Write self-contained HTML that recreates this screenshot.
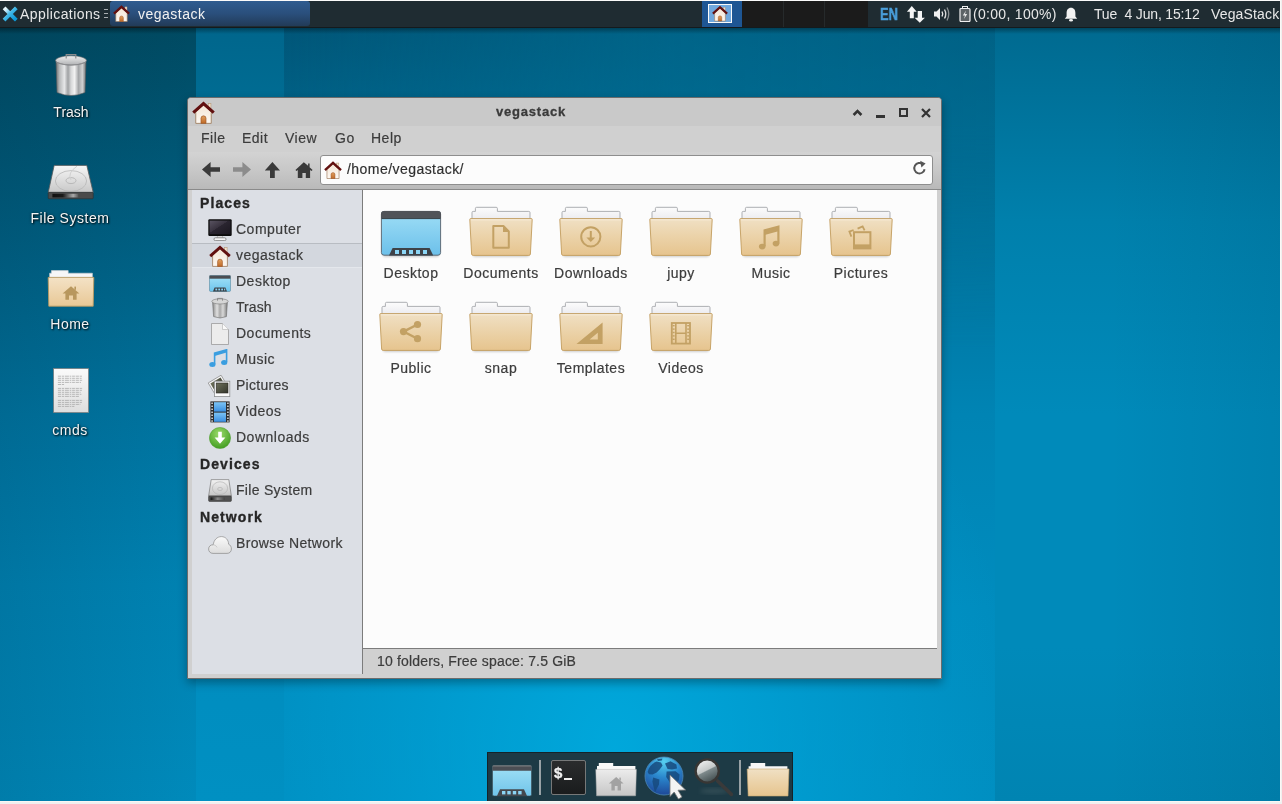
<!DOCTYPE html>
<html><head><meta charset="utf-8">
<style>
*{margin:0;padding:0;box-sizing:border-box}
html,body{width:1282px;height:804px;overflow:hidden;background:#f0f0f0;font-family:"Liberation Sans",sans-serif}
.a{position:absolute}
.t{position:absolute;white-space:nowrap;font-size:14px;line-height:14px;letter-spacing:0.5px;will-change:transform}
#wall{left:0;top:28px;width:1280px;height:773px;overflow:hidden;background:linear-gradient(180deg,#004f68 0%,#006688 30%,#0084b0 70%,#0098c8 100%)}
#panel{left:0;top:1px;width:1280px;height:27px;background:#1f2c32;border-bottom:1px solid #141a1d}
.ptxt{color:#e8e8e8}
.mt{color:#3c3c3c;margin-top:-1px;-webkit-text-stroke:0.2px #3c3c3c}
.sh{font-weight:bold;color:#262626;letter-spacing:1.1px;margin-top:-1px;-webkit-text-stroke:0.35px #262626}
.ct{width:90px;text-align:center}
.dl{color:#f4f4f4;text-align:center;text-shadow:1px 1px 2px rgba(0,0,0,0.9),0 0 3px rgba(0,0,0,0.5)}
</style></head><body>
<div class="a" style="left:0;top:0;width:1282px;height:1px;background:#fbfbfb"></div>
<div class="a" id="wall">
  <div class="a" style="left:0;top:0;width:196px;height:773px;background:linear-gradient(180deg,#004a62 0%,#005e80 25%,#0074a0 50%,#0082b2 72%,#008abb 100%)"></div>
  <div class="a" style="left:196px;top:0;width:88px;height:773px;background:linear-gradient(180deg,#00668c 0%,#00769e 25%,#0084b2 50%,#008cbe 75%,#0090c2 100%)"></div>
  <div class="a" style="left:284px;top:0;width:711px;height:773px;background:linear-gradient(180deg,#005678 0%,#00729c 25%,#0084b4 50%,#008cbe 75%,#008ec0 100%)"></div>
  <div class="a" style="left:284px;top:0;width:711px;height:320px;background:linear-gradient(90deg,rgba(0,112,150,0) 0%,rgba(0,112,150,0.55) 55%,rgba(0,112,150,0.45) 100%);-webkit-mask-image:linear-gradient(180deg,#000 0%,#000 30%,transparent 100%)"></div>
  <div class="a" style="left:284px;top:0;width:711px;height:773px;background:radial-gradient(ellipse 400px 540px at 330px 720px,rgba(0,172,224,0.85) 0%,rgba(0,168,222,0.45) 50%,rgba(0,160,216,0) 100%)"></div>
  <div class="a" style="left:995px;top:0;width:285px;height:773px;background:linear-gradient(180deg,#006a90 0%,#0080ac 25%,#008aba 50%,#008aba 80%,#0084b2 100%)"></div>
  <div class="a" style="left:995px;top:0;width:285px;height:773px;background:linear-gradient(90deg,rgba(0,30,50,0) 40%,rgba(0,30,50,0.08) 100%)"></div>
  <div class="a" style="left:0;top:0;width:196px;height:773px;background:linear-gradient(90deg,rgba(0,30,50,0.12) 0%,rgba(0,30,50,0) 100%)"></div>
  <div class="a" style="left:0;top:0;width:1280px;height:6px;background:linear-gradient(180deg,rgba(0,0,0,0.35),rgba(0,0,0,0))"></div>
</div>
<div class="a" id="panel"></div>
<svg width="0" height="0" style="position:absolute">
 <defs>
  <linearGradient id="hbody" x1="0" y1="0" x2="0" y2="1"><stop offset="0" stop-color="#f4e6d6"/><stop offset="1" stop-color="#fdf8f2"/></linearGradient>
  <linearGradient id="hdoor" x1="0" y1="0" x2="0" y2="1"><stop offset="0" stop-color="#e0a060"/><stop offset="1" stop-color="#c06a28"/></linearGradient>
  <linearGradient id="fback" x1="0" y1="0" x2="0" y2="1"><stop offset="0" stop-color="#fcfcfc"/><stop offset="1" stop-color="#ececf0"/></linearGradient>
  <linearGradient id="ffront" x1="0" y1="0" x2="0" y2="1"><stop offset="0" stop-color="#f0e0c4"/><stop offset="0.5" stop-color="#ebd2a8"/><stop offset="1" stop-color="#e6c48e"/></linearGradient>
  <filter id="fsh" x="-20%" y="-20%" width="140%" height="160%"><feGaussianBlur stdDeviation="1.2"/></filter>
  <linearGradient id="xg" x1="0" y1="0" x2="1" y2="1"><stop offset="0" stop-color="#e8f6fc"/><stop offset="0.45" stop-color="#40b8e8"/><stop offset="1" stop-color="#0c98d8"/></linearGradient>
 </defs>
</svg>
<svg class="a" style="left:2px;top:6px" width="16" height="16" viewBox="0 0 16 16"><path d="M3.4 3.2 L13 12.8 M13 3.2 L3.4 12.8" stroke="url(#xg)" stroke-width="3.8" stroke-linecap="square"/></svg>
<div class="t ptxt" style="left:20px;top:7px;letter-spacing:0.42px">Applications</div>
<div class="a" style="left:104px;top:9px;width:4px;height:1px;background:#a8adb0"></div>
<div class="a" style="left:104px;top:13px;width:4px;height:1px;background:#a8adb0"></div>
<div class="a" style="left:104px;top:17px;width:4px;height:1px;background:#a8adb0"></div>
<div class="a" style="left:110px;top:1px;width:200px;height:25px;border-radius:3px;background:linear-gradient(180deg,#2f5c90 0%,#2a4f7c 50%,#223b58 100%)"></div>
<svg class="a" style="left:113px;top:5px" width="17" height="17" viewBox="0 0 22 22"><rect x="15.5" y="2.5" width="2.6" height="6" fill="#f3e3cf" stroke="#b89a7a" stroke-width="0.6"/>
   <path d="M3.6 10.2 L11 3.6 L18.4 10.2 V21.4 H3.6 Z" fill="url(#hbody)" stroke="#9c7a5a" stroke-width="0.8"/>
   <path d="M1.2 11.2 L11 2.4 L20.8 11.2" fill="none" stroke="#621010" stroke-width="2.9" stroke-linejoin="miter"/>
   <path d="M8.6 21.4 V16.6 A2.4 2.4 0 0 1 13.4 16.6 V21.4 Z" fill="url(#hdoor)" stroke="#9a5020" stroke-width="0.6"/></svg>
<div class="t ptxt" style="left:138px;top:7px;color:#f2f2f2">vegastack</div>
<div class="a" style="left:702px;top:1px;width:40px;height:26px;background:#1e5694"></div>
<div class="a" style="left:708px;top:4px;width:24px;height:19px;border:1.5px solid #fafafa;background:#70a8de"></div>
<svg class="a" style="left:712px;top:5px" width="16" height="17" viewBox="0 0 22 22"><rect x="15.5" y="2.5" width="2.6" height="6" fill="#f3e3cf" stroke="#b89a7a" stroke-width="0.6"/>
   <path d="M3.6 10.2 L11 3.6 L18.4 10.2 V21.4 H3.6 Z" fill="url(#hbody)" stroke="#9c7a5a" stroke-width="0.8"/>
   <path d="M1.2 11.2 L11 2.4 L20.8 11.2" fill="none" stroke="#621010" stroke-width="2.9" stroke-linejoin="miter"/>
   <path d="M8.6 21.4 V16.6 A2.4 2.4 0 0 1 13.4 16.6 V21.4 Z" fill="url(#hdoor)" stroke="#9a5020" stroke-width="0.6"/></svg>
<div class="a" style="left:742px;top:1px;width:126px;height:26px;background:#1b1b1b"></div>
<div class="a" style="left:783px;top:1px;width:1px;height:26px;background:#262a2b"></div>
<div class="a" style="left:824px;top:1px;width:1px;height:26px;background:#262a2b"></div>
<div class="t" style="left:880px;top:7px;font-size:16px;line-height:16px;font-weight:bold;color:#4a9fdc;letter-spacing:0;transform:scaleX(0.8);transform-origin:0 0;-webkit-text-stroke:0.5px #4a9fdc">EN</div>
<svg class="a" style="left:906px;top:5px" width="20" height="19" viewBox="0 0 20 19"><path d="M5.8 0.9 L0.9 6.7 H3.8 V13.3 H7.8 V6.7 H10.7 Z" fill="#f4f4f4"/><path d="M13.8 17.8 L8.6 12.8 H11.7 V6 H16 V12.8 H18.9 Z" fill="#f4f4f4"/></svg>
<svg class="a" style="left:933px;top:6px" width="17" height="16" viewBox="0 0 17 16"><path d="M1 5.5 H3.5 L7 2 V14 L3.5 10.5 H1 Z" fill="#f0f0f0"/><path d="M9 5.5 Q10.5 8 9 10.5" stroke="#e8e8e8" stroke-width="1.4" fill="none"/><path d="M11.5 3.5 Q14 8 11.5 12.5" stroke="#d8d8d8" stroke-width="1.4" fill="none"/><path d="M14 1.5 Q17.5 8 14 14.5" stroke="#8a8f92" stroke-width="1.3" fill="none"/></svg>
<svg class="a" style="left:959px;top:6px" width="12" height="16" viewBox="0 0 12 16"><rect x="3.5" y="0.5" width="5" height="2" fill="none" stroke="#eee" stroke-width="1"/><rect x="1" y="2.5" width="10" height="13" rx="1" fill="#5d6366" stroke="#f0f0f0" stroke-width="1.2"/><path d="M7 4.5 L3.8 9.5 H6 L5 13 L8.2 8 H6 Z" fill="#e8e8e8"/></svg>
<div class="t ptxt" style="left:973px;top:7px;letter-spacing:0.3px">(0:00, 100%)</div>
<svg class="a" style="left:1064px;top:7px" width="14" height="15" viewBox="0 0 14 15"><path d="M7 0.8 C4 0.8 2.6 3.2 2.6 6 V9.5 L0.8 11.8 H13.2 L11.4 9.5 V6 C11.4 3.2 10 0.8 7 0.8 Z" fill="#f2f2f2"/><ellipse cx="7" cy="13.2" rx="2" ry="1.3" fill="#f2f2f2"/></svg>
<div class="t ptxt" style="left:1094px;top:7px;letter-spacing:-0.17px">Tue&nbsp; 4 Jun, 15:12</div>
<div class="t ptxt" style="left:1211px;top:7px;letter-spacing:0.15px">VegaStack</div>
<!-- DESKTOP ICONS -->
<svg class="a" style="left:52px;top:52px" width="38" height="46" viewBox="0 0 38 46">
 <defs><linearGradient id="tcan" x1="0" y1="0" x2="1" y2="0"><stop offset="0" stop-color="#6e7072"/><stop offset="0.12" stop-color="#b8babb"/><stop offset="0.28" stop-color="#e6e7e8"/><stop offset="0.4" stop-color="#9fa1a3"/><stop offset="0.5" stop-color="#d6d7d8"/><stop offset="0.62" stop-color="#f2f2f2"/><stop offset="0.75" stop-color="#a4a6a8"/><stop offset="0.88" stop-color="#cfd0d1"/><stop offset="1" stop-color="#707274"/></linearGradient>
 <linearGradient id="tlid" x1="0" y1="0" x2="0" y2="1"><stop offset="0" stop-color="#f0f0f0"/><stop offset="1" stop-color="#b0b2b4"/></linearGradient></defs>
 <path d="M4 8.5 L5 40.5 Q19 46.5 33 40.5 L34 8.5 Z" fill="url(#tcan)" stroke="#5a5c5e" stroke-width="0.6"/>
 <ellipse cx="19" cy="8.4" rx="15.4" ry="4.6" fill="url(#tlid)" stroke="#6a6c6e" stroke-width="0.6"/>
 <path d="M4.4 10.4 Q19 16 33.6 10.4" fill="none" stroke="#8a8c8e" stroke-width="0.8"/>
 <path d="M14.2 6.6 V2.6 H23.8 V6.6" fill="none" stroke="#8a8c8e" stroke-width="1.2"/>
</svg>
<div class="t dl" style="left:0;top:105px;width:142px;letter-spacing:0">Trash</div>
<svg class="a" style="left:47px;top:163px" width="48" height="38" viewBox="0 0 48 38">
 <defs><linearGradient id="dtop" x1="0" y1="0" x2="0" y2="1"><stop offset="0" stop-color="#f6f6f6"/><stop offset="1" stop-color="#c8c8c8"/></linearGradient>
 <linearGradient id="dslot" x1="0" y1="0" x2="1" y2="0"><stop offset="0" stop-color="#111"/><stop offset="0.4" stop-color="#1a1a1a"/><stop offset="0.8" stop-color="#aaa"/><stop offset="1" stop-color="#555"/></linearGradient></defs>
 <path d="M7.2 2.4 H39.8 L46.2 29.4 H1.2 Z" fill="url(#dtop)" stroke="#5c5c5c" stroke-width="0.8"/>
 <ellipse cx="24" cy="18" rx="15.6" ry="10.4" fill="none" stroke="#b8b8b8" stroke-width="0.8"/>
 <ellipse cx="24" cy="17.6" rx="5" ry="3" fill="none" stroke="#b0b0b0" stroke-width="0.8"/>
 <path d="M30 3.2 Q20 10 24 17" fill="none" stroke="#d0d0d0" stroke-width="1"/>
 <rect x="1.2" y="29.4" width="45" height="6.4" rx="0.8" fill="#4a4a4a" stroke="#2e2e2e" stroke-width="0.6"/>
 <rect x="5.4" y="30.8" width="26" height="3.6" fill="url(#dslot)"/>
</svg>
<div class="t dl" style="left:0;top:211px;width:140px;letter-spacing:0.55px">File System</div>
<svg class="a" style="left:46px;top:268px" width="50" height="42" viewBox="0 0 50 42">
 <defs><linearGradient id="hf" x1="0" y1="0" x2="0" y2="1"><stop offset="0" stop-color="#f4e2c6"/><stop offset="1" stop-color="#e8c896"/></linearGradient></defs>
 <path d="M3.6 10 V5.2 H5.4 V2.6 H22.2 V5.2 H46.4 V10 Z" fill="#f6f6f8" stroke="#d0d0d4" stroke-width="0.6"/>
 <path d="M2.2 9.4 H47.8 L47.2 38.2 H2.8 Z" fill="url(#hf)" stroke="#b89a62" stroke-width="0.9"/>
 <path d="M25 18.2 L16.6 25.6 H19.4 V31.8 H23 V27.6 H27 V31.8 H30.6 V25.6 H33.4 Z" fill="#b8975e"/>
 <rect x="28.4" y="18.6" width="1.6" height="3.2" fill="#b8975e"/>
</svg>
<div class="t dl" style="left:0;top:317px;width:140px">Home</div>
<svg class="a" style="left:52px;top:367px" width="38" height="47" viewBox="0 0 38 47">
 <defs><linearGradient id="pap" x1="0" y1="0" x2="0" y2="1"><stop offset="0" stop-color="#fafafa"/><stop offset="1" stop-color="#dedede"/></linearGradient></defs>
 <rect x="1.6" y="1.6" width="35" height="44" fill="url(#pap)" stroke="#7a7a7a" stroke-width="0.7"/>
 <g stroke="#a0a0a0" stroke-width="0.7" stroke-dasharray="3.2 0.8 2.2 0.8 4 0.8 1.6 0.8 2.8 0.8"><path d="M5.9 9.2 H30.0"/><path d="M5.9 11.3 H29.6"/><path d="M5.9 13.3 H30.8"/><path d="M5.9 15.4 H29.0"/><path d="M5.9 17.5 H12.4"/><path d="M5.9 21.4 H30.8"/><path d="M5.9 23.3 H30.4"/><path d="M5.9 25.3 H28.6"/><path d="M5.9 27.3 H29.4"/><path d="M5.9 29.4 H27.0"/><path d="M5.9 33.4 H30.8"/><path d="M5.9 35.4 H30.0"/><path d="M5.9 37.4 H28.4"/><path d="M5.9 39.4 H22.4"/></g>
</svg>
<div class="t dl" style="left:0;top:423px;width:140px">cmds</div>
<!-- WINDOW -->
<div class="a" style="left:187px;top:97px;width:755px;height:582px;border-radius:4px 4px 1px 1px;box-shadow:0 4px 10px rgba(0,0,0,0.32)"></div>
<div class="a" id="win" style="left:187px;top:97px;width:755px;height:582px;border:1px solid #6c6c6c;border-radius:4px 4px 1px 1px;background:#d0d0d0;overflow:hidden">
 <div class="a" style="left:0;top:0;width:753px;height:28px;background:#c9c9c9"></div>
 <svg class="a" style="left:4px;top:3px" width="23" height="23" viewBox="0 0 22 22"><rect x="15.5" y="2.5" width="2.6" height="6" fill="#f3e3cf" stroke="#b89a7a" stroke-width="0.6"/>
   <path d="M3.6 10.2 L11 3.6 L18.4 10.2 V21.4 H3.6 Z" fill="url(#hbody)" stroke="#9c7a5a" stroke-width="0.8"/>
   <path d="M1.2 11.2 L11 2.4 L20.8 11.2" fill="none" stroke="#621010" stroke-width="2.9" stroke-linejoin="miter"/>
   <path d="M8.6 21.4 V16.6 A2.4 2.4 0 0 1 13.4 16.6 V21.4 Z" fill="url(#hdoor)" stroke="#9a5020" stroke-width="0.6"/></svg>
 <div class="t" style="left:308px;top:7px;font-weight:bold;font-size:13px;line-height:13px;letter-spacing:0.8px;color:#3a3a3a;-webkit-text-stroke:0.3px #3a3a3a">vegastack</div>
 <div class="a" style="left:0;top:28px;width:753px;height:26px;background:#d0d0d0"></div>
 <div class="t mt" style="left:13px;top:34px">File</div>
 <div class="t mt" style="left:54px;top:34px">Edit</div>
 <div class="t mt" style="left:97px;top:34px">View</div>
 <div class="t mt" style="left:147px;top:34px">Go</div>
 <div class="t mt" style="left:183px;top:34px">Help</div>
 <div class="a" style="left:0;top:54px;width:753px;height:37px;background:linear-gradient(180deg,#d3d3d3 0%,#c6c6c6 55%,#b9b9b9 100%)"></div>
 <div class="a" style="left:0;top:91px;width:753px;height:1px;background:#8a8a8a"></div>
 <svg class="a" style="left:12px;top:62px" width="22" height="18" viewBox="0 0 22 18"><path d="M2 9.4 L10.6 2 V7.2 H20 V11.8 H10.6 V17 Z" fill="#3a3a3a"/></svg>
 <svg class="a" style="left:44px;top:62px" width="22" height="18" viewBox="0 0 22 18"><path d="M19 9.4 L10.4 2 V7.2 H1 V11.8 H10.4 V17 Z" fill="#8c8c8c"/></svg>
 <svg class="a" style="left:75px;top:62px" width="18" height="18" viewBox="0 0 18 18"><path d="M9.4 2 L17 10.4 H11.8 V18 H7 V10.4 H1.8 Z" fill="#3a3a3a"/></svg>
 <svg class="a" style="left:106px;top:62px" width="20" height="18" viewBox="0 0 20 18"><path d="M9.8 2.2 L1.4 10 L2.6 11 L3.8 9.9 V18 H8.4 V13 H11.8 V18 H16.1 V9.9 L17.4 11 L18.6 10 L15.6 7.2 V3.4 H14.1 V5.8 Z" fill="#3a3a3a"/></svg>
 <div class="a" style="left:132px;top:57px;width:613px;height:30px;background:#fcfcfc;border:1px solid #8e8e8e;border-radius:3px"></div>
 <svg class="a" style="left:136px;top:63px" width="18" height="18" viewBox="0 0 22 22"><rect x="15.5" y="2.5" width="2.6" height="6" fill="#f3e3cf" stroke="#b89a7a" stroke-width="0.6"/>
   <path d="M3.6 10.2 L11 3.6 L18.4 10.2 V21.4 H3.6 Z" fill="url(#hbody)" stroke="#9c7a5a" stroke-width="0.8"/>
   <path d="M1.2 11.2 L11 2.4 L20.8 11.2" fill="none" stroke="#621010" stroke-width="2.9" stroke-linejoin="miter"/>
   <path d="M8.6 21.4 V16.6 A2.4 2.4 0 0 1 13.4 16.6 V21.4 Z" fill="url(#hdoor)" stroke="#9a5020" stroke-width="0.6"/></svg>
 <div class="t mt" style="left:159px;top:65px;color:#2e2e2e;letter-spacing:0.45px">/home/vegastack/</div>
 <svg class="a" style="left:724px;top:62px" width="16" height="16" viewBox="0 0 16 16"><path d="M12.6 9.2 A5.2 5.2 0 1 1 10.8 4.2" fill="none" stroke="#555" stroke-width="2"/><path d="M8.2 0.8 L13.6 3.6 L9.4 7.6 Z" fill="#555"/></svg>
 <!-- body -->
 <div class="a" style="left:4px;top:92px;width:170px;height:484px;background:#dcdfe5"></div>
 <div class="a" style="left:174px;top:92px;width:1px;height:484px;background:#7c7c7c"></div>
 <div class="a" style="left:175px;top:92px;width:574px;height:458px;background:#fcfcfc"></div>
 <div class="a" style="left:175px;top:550px;width:574px;height:1px;background:#7c7c7c"></div>
 <div class="t mt" style="left:189px;top:557px;letter-spacing:0.17px">10 folders, Free space: 7.5 GiB</div>
 <!-- content -->
 <div class="t mt ct" style="left:178px;top:169px">Desktop</div>
 <svg class="a" style="left:281px;top:102px" width="64" height="64" viewBox="0 0 64 64"><rect x="4" y="52" width="56" height="5" rx="2" fill="#000" opacity="0.18" filter="url(#fsh)"/>
   <path d="M3 19 V12.6 Q3 11.4 4.2 11.4 H6.4 V8.5 Q6.4 7.3 7.6 7.3 H27.2 Q28.4 7.3 28.4 8.5 V11.4 H59.8 Q61 11.4 61 12.6 V19 Z" fill="url(#fback)" stroke="#a4a6aa" stroke-width="0.9"/>
   <path d="M1.4 18.6 H62.6 Q63.2 18.6 63.2 19.6 L61.4 54 Q61.3 55.4 59.8 55.4 H4.2 Q2.7 55.4 2.6 54 L0.8 19.6 Q0.8 18.6 1.4 18.6 Z" fill="url(#ffront)" stroke="#c29c5c" stroke-width="0.9"/>
   <path d="M2 19.8 H62" stroke="#f8eedc" stroke-width="0.9"/></svg>
 <div class="t mt ct" style="left:268px;top:169px">Documents</div>
 <svg class="a" style="left:371px;top:102px" width="64" height="64" viewBox="0 0 64 64"><rect x="4" y="52" width="56" height="5" rx="2" fill="#000" opacity="0.18" filter="url(#fsh)"/>
   <path d="M3 19 V12.6 Q3 11.4 4.2 11.4 H6.4 V8.5 Q6.4 7.3 7.6 7.3 H27.2 Q28.4 7.3 28.4 8.5 V11.4 H59.8 Q61 11.4 61 12.6 V19 Z" fill="url(#fback)" stroke="#a4a6aa" stroke-width="0.9"/>
   <path d="M1.4 18.6 H62.6 Q63.2 18.6 63.2 19.6 L61.4 54 Q61.3 55.4 59.8 55.4 H4.2 Q2.7 55.4 2.6 54 L0.8 19.6 Q0.8 18.6 1.4 18.6 Z" fill="url(#ffront)" stroke="#c29c5c" stroke-width="0.9"/>
   <path d="M2 19.8 H62" stroke="#f8eedc" stroke-width="0.9"/></svg>
 <div class="t mt ct" style="left:358px;top:169px">Downloads</div>
 <svg class="a" style="left:461px;top:102px" width="64" height="64" viewBox="0 0 64 64"><rect x="4" y="52" width="56" height="5" rx="2" fill="#000" opacity="0.18" filter="url(#fsh)"/>
   <path d="M3 19 V12.6 Q3 11.4 4.2 11.4 H6.4 V8.5 Q6.4 7.3 7.6 7.3 H27.2 Q28.4 7.3 28.4 8.5 V11.4 H59.8 Q61 11.4 61 12.6 V19 Z" fill="url(#fback)" stroke="#a4a6aa" stroke-width="0.9"/>
   <path d="M1.4 18.6 H62.6 Q63.2 18.6 63.2 19.6 L61.4 54 Q61.3 55.4 59.8 55.4 H4.2 Q2.7 55.4 2.6 54 L0.8 19.6 Q0.8 18.6 1.4 18.6 Z" fill="url(#ffront)" stroke="#c29c5c" stroke-width="0.9"/>
   <path d="M2 19.8 H62" stroke="#f8eedc" stroke-width="0.9"/></svg>
 <div class="t mt ct" style="left:448px;top:169px">jupy</div>
 <svg class="a" style="left:551px;top:102px" width="64" height="64" viewBox="0 0 64 64"><rect x="4" y="52" width="56" height="5" rx="2" fill="#000" opacity="0.18" filter="url(#fsh)"/>
   <path d="M3 19 V12.6 Q3 11.4 4.2 11.4 H6.4 V8.5 Q6.4 7.3 7.6 7.3 H27.2 Q28.4 7.3 28.4 8.5 V11.4 H59.8 Q61 11.4 61 12.6 V19 Z" fill="url(#fback)" stroke="#a4a6aa" stroke-width="0.9"/>
   <path d="M1.4 18.6 H62.6 Q63.2 18.6 63.2 19.6 L61.4 54 Q61.3 55.4 59.8 55.4 H4.2 Q2.7 55.4 2.6 54 L0.8 19.6 Q0.8 18.6 1.4 18.6 Z" fill="url(#ffront)" stroke="#c29c5c" stroke-width="0.9"/>
   <path d="M2 19.8 H62" stroke="#f8eedc" stroke-width="0.9"/></svg>
 <div class="t mt ct" style="left:538px;top:169px">Music</div>
 <svg class="a" style="left:641px;top:102px" width="64" height="64" viewBox="0 0 64 64"><rect x="4" y="52" width="56" height="5" rx="2" fill="#000" opacity="0.18" filter="url(#fsh)"/>
   <path d="M3 19 V12.6 Q3 11.4 4.2 11.4 H6.4 V8.5 Q6.4 7.3 7.6 7.3 H27.2 Q28.4 7.3 28.4 8.5 V11.4 H59.8 Q61 11.4 61 12.6 V19 Z" fill="url(#fback)" stroke="#a4a6aa" stroke-width="0.9"/>
   <path d="M1.4 18.6 H62.6 Q63.2 18.6 63.2 19.6 L61.4 54 Q61.3 55.4 59.8 55.4 H4.2 Q2.7 55.4 2.6 54 L0.8 19.6 Q0.8 18.6 1.4 18.6 Z" fill="url(#ffront)" stroke="#c29c5c" stroke-width="0.9"/>
   <path d="M2 19.8 H62" stroke="#f8eedc" stroke-width="0.9"/></svg>
 <div class="t mt ct" style="left:628px;top:169px">Pictures</div>
 <svg class="a" style="left:191px;top:197px" width="64" height="64" viewBox="0 0 64 64"><rect x="4" y="52" width="56" height="5" rx="2" fill="#000" opacity="0.18" filter="url(#fsh)"/>
   <path d="M3 19 V12.6 Q3 11.4 4.2 11.4 H6.4 V8.5 Q6.4 7.3 7.6 7.3 H27.2 Q28.4 7.3 28.4 8.5 V11.4 H59.8 Q61 11.4 61 12.6 V19 Z" fill="url(#fback)" stroke="#a4a6aa" stroke-width="0.9"/>
   <path d="M1.4 18.6 H62.6 Q63.2 18.6 63.2 19.6 L61.4 54 Q61.3 55.4 59.8 55.4 H4.2 Q2.7 55.4 2.6 54 L0.8 19.6 Q0.8 18.6 1.4 18.6 Z" fill="url(#ffront)" stroke="#c29c5c" stroke-width="0.9"/>
   <path d="M2 19.8 H62" stroke="#f8eedc" stroke-width="0.9"/></svg>
 <div class="t mt ct" style="left:178px;top:264px">Public</div>
 <svg class="a" style="left:281px;top:197px" width="64" height="64" viewBox="0 0 64 64"><rect x="4" y="52" width="56" height="5" rx="2" fill="#000" opacity="0.18" filter="url(#fsh)"/>
   <path d="M3 19 V12.6 Q3 11.4 4.2 11.4 H6.4 V8.5 Q6.4 7.3 7.6 7.3 H27.2 Q28.4 7.3 28.4 8.5 V11.4 H59.8 Q61 11.4 61 12.6 V19 Z" fill="url(#fback)" stroke="#a4a6aa" stroke-width="0.9"/>
   <path d="M1.4 18.6 H62.6 Q63.2 18.6 63.2 19.6 L61.4 54 Q61.3 55.4 59.8 55.4 H4.2 Q2.7 55.4 2.6 54 L0.8 19.6 Q0.8 18.6 1.4 18.6 Z" fill="url(#ffront)" stroke="#c29c5c" stroke-width="0.9"/>
   <path d="M2 19.8 H62" stroke="#f8eedc" stroke-width="0.9"/></svg>
 <div class="t mt ct" style="left:268px;top:264px">snap</div>
 <svg class="a" style="left:371px;top:197px" width="64" height="64" viewBox="0 0 64 64"><rect x="4" y="52" width="56" height="5" rx="2" fill="#000" opacity="0.18" filter="url(#fsh)"/>
   <path d="M3 19 V12.6 Q3 11.4 4.2 11.4 H6.4 V8.5 Q6.4 7.3 7.6 7.3 H27.2 Q28.4 7.3 28.4 8.5 V11.4 H59.8 Q61 11.4 61 12.6 V19 Z" fill="url(#fback)" stroke="#a4a6aa" stroke-width="0.9"/>
   <path d="M1.4 18.6 H62.6 Q63.2 18.6 63.2 19.6 L61.4 54 Q61.3 55.4 59.8 55.4 H4.2 Q2.7 55.4 2.6 54 L0.8 19.6 Q0.8 18.6 1.4 18.6 Z" fill="url(#ffront)" stroke="#c29c5c" stroke-width="0.9"/>
   <path d="M2 19.8 H62" stroke="#f8eedc" stroke-width="0.9"/></svg>
 <div class="t mt ct" style="left:358px;top:264px">Templates</div>
 <svg class="a" style="left:461px;top:197px" width="64" height="64" viewBox="0 0 64 64"><rect x="4" y="52" width="56" height="5" rx="2" fill="#000" opacity="0.18" filter="url(#fsh)"/>
   <path d="M3 19 V12.6 Q3 11.4 4.2 11.4 H6.4 V8.5 Q6.4 7.3 7.6 7.3 H27.2 Q28.4 7.3 28.4 8.5 V11.4 H59.8 Q61 11.4 61 12.6 V19 Z" fill="url(#fback)" stroke="#a4a6aa" stroke-width="0.9"/>
   <path d="M1.4 18.6 H62.6 Q63.2 18.6 63.2 19.6 L61.4 54 Q61.3 55.4 59.8 55.4 H4.2 Q2.7 55.4 2.6 54 L0.8 19.6 Q0.8 18.6 1.4 18.6 Z" fill="url(#ffront)" stroke="#c29c5c" stroke-width="0.9"/>
   <path d="M2 19.8 H62" stroke="#f8eedc" stroke-width="0.9"/></svg>
 <div class="t mt ct" style="left:448px;top:264px">Videos</div>
 <svg class="a" style="left:191px;top:102px" width="64" height="64" viewBox="0 0 64 64">
  <defs><linearGradient id="dskb" x1="0" y1="0" x2="0" y2="1"><stop offset="0" stop-color="#9edef6"/><stop offset="1" stop-color="#6cc0ea"/></linearGradient></defs>
  <rect x="4" y="52" width="56" height="5" rx="2" fill="#000" opacity="0.18" filter="url(#fsh)"/>
  <rect x="2.4" y="11.4" width="59.2" height="43.8" rx="2.6" fill="url(#dskb)" stroke="#56606a" stroke-width="0.9"/>
  <path d="M2 14 Q2 11 5 11 H59 Q62 11 62 14 V18.2 H2 Z" fill="#505358"/>
  <path d="M2.6 18.6 H61.4" stroke="#2a2c30" stroke-width="0.9"/>
  <path d="M10 55.4 L13.6 48 H50.6 L54.2 55.4 Z" fill="#3e4248"/>
  <g fill="#8cd6f6"><rect x="16" y="50" width="4" height="4"/><rect x="23" y="50" width="4" height="4"/><rect x="30" y="50" width="4" height="4"/><rect x="37" y="50" width="4" height="4"/><rect x="44" y="50" width="4" height="4"/></g>
 </svg>
 <svg class="a" style="left:281px;top:102px" width="64" height="64" viewBox="0 0 64 64"><path d="M24.3 26 H34.4 L39.8 31.4 V47.7 H24.3 Z" fill="none" stroke="#c3a164" stroke-width="2" stroke-linejoin="round"/><path d="M34 26 V32 H40 Z" fill="#c3a164"/></svg>
 <svg class="a" style="left:371px;top:102px" width="64" height="64" viewBox="0 0 64 64"><circle cx="31.8" cy="36.8" r="9.6" fill="none" stroke="#c3a164" stroke-width="2"/><path d="M31.8 31 V40" stroke="#c3a164" stroke-width="2"/><path d="M27.4 37.6 L31.8 42 L36.2 37.6 Z" fill="#c3a164"/></svg>
 <svg class="a" style="left:551px;top:102px" width="64" height="64" viewBox="0 0 64 64"><path d="M25.6 46.2 V30.4 L39.4 26.6 V43.4" fill="none" stroke="#c3a164" stroke-width="2.2"/><path d="M25.6 30.2 L39.4 26.4 V31.2 L25.6 35 Z" fill="#c3a164"/><ellipse cx="23.2" cy="46.6" rx="3.3" ry="2.8" fill="#c3a164"/><ellipse cx="37" cy="43.6" rx="3.3" ry="2.8" fill="#c3a164"/></svg>
 <svg class="a" style="left:641px;top:102px" width="64" height="64" viewBox="0 0 64 64"><rect x="25" y="32.2" width="16.4" height="16.2" fill="none" stroke="#c3a164" stroke-width="2"/><rect x="25" y="44.4" width="16.4" height="4" fill="#c3a164"/><path d="M22.4 36.6 L20.4 31.6 L24.6 30" fill="none" stroke="#c3a164" stroke-width="1.8"/><path d="M28.6 28.6 L33.6 26.4 L35.6 30.4" fill="none" stroke="#c3a164" stroke-width="1.8"/></svg>
 <svg class="a" style="left:191px;top:197px" width="64" height="64" viewBox="0 0 64 64"><path d="M38.5 29.5 L24.5 36.6 L38.5 43.7" fill="none" stroke="#c3a164" stroke-width="2.4"/><circle cx="38.5" cy="29.5" r="3.6" fill="#c3a164"/><circle cx="24.5" cy="36.6" r="3.6" fill="#c3a164"/><circle cx="38.5" cy="43.7" r="3.6" fill="#c3a164"/></svg>
 <svg class="a" style="left:371px;top:197px" width="64" height="64" viewBox="0 0 64 64"><path d="M17.5 49 L43.6 27.6 V49 Z M30.6 44.6 H38.8 V37.8 Z" fill="#c3a164" fill-rule="evenodd"/></svg>
 <svg class="a" style="left:461px;top:197px" width="64" height="64" viewBox="0 0 64 64"><rect x="22.8" y="28" width="18.2" height="20.6" fill="none" stroke="#c3a164" stroke-width="1.8"/><path d="M26.8 28 V48.6 M37 28 V48.6 M26.8 38.3 H37" stroke="#c3a164" stroke-width="1.6"/><g fill="#c3a164"><rect x="23.6" y="30" width="2" height="1.4"/><rect x="23.6" y="33.4" width="2" height="1.4"/><rect x="23.6" y="36.8" width="2" height="1.4"/><rect x="23.6" y="40.2" width="2" height="1.4"/><rect x="23.6" y="43.6" width="2" height="1.4"/><rect x="38.2" y="30" width="2" height="1.4"/><rect x="38.2" y="33.4" width="2" height="1.4"/><rect x="38.2" y="36.8" width="2" height="1.4"/><rect x="38.2" y="40.2" width="2" height="1.4"/><rect x="38.2" y="43.6" width="2" height="1.4"/></g></svg>
 <!-- sidebar -->
 <div class="a" style="left:4px;top:145px;width:170px;height:25px;background:#d3d7de;border-top:1px solid #b8bcc2;border-bottom:1px solid #e4e7ec"></div>
 <div class="t sh" style="left:12px;top:99px">Places</div>
 <div class="t sh" style="left:12px;top:360px">Devices</div>
 <div class="t sh" style="left:12px;top:413px">Network</div>
 <div class="t mt" style="left:48px;top:125px">Computer</div>
 <div class="t mt" style="left:48px;top:151px">vegastack</div>
 <div class="t mt" style="left:48px;top:177px">Desktop</div>
 <div class="t mt" style="left:48px;top:203px;letter-spacing:0.05px">Trash</div>
 <div class="t mt" style="left:48px;top:229px">Documents</div>
 <div class="t mt" style="left:48px;top:255px">Music</div>
 <div class="t mt" style="left:48px;top:281px;letter-spacing:0.27px">Pictures</div>
 <div class="t mt" style="left:48px;top:307px">Videos</div>
 <div class="t mt" style="left:48px;top:333px">Downloads</div>
 <div class="t mt" style="left:48px;top:386px;letter-spacing:0.30px">File System</div>
 <div class="t mt" style="left:48px;top:439px;letter-spacing:0.35px">Browse Network</div>

 <svg class="a" style="left:20px;top:121px" width="24" height="22" viewBox="0 0 24 22">
  <defs><linearGradient id="scr" x1="0" y1="0" x2="1" y2="1"><stop offset="0" stop-color="#5a5462"/><stop offset="0.45" stop-color="#38323e"/><stop offset="0.46" stop-color="#2a2530"/><stop offset="1" stop-color="#1c1820"/></linearGradient></defs>
  <path d="M9.6 16.5 H14.4 L15 19.4 H9 Z" fill="#d8d8d8" stroke="#8a8a8a" stroke-width="0.5"/>
  <rect x="6" y="18.8" width="12" height="2.8" rx="1.3" fill="#f6f6f6" stroke="#6a6a6a" stroke-width="0.7"/>
  <rect x="0.3" y="0.3" width="23.4" height="16.6" rx="1.2" fill="#0c0c0c"/>
  <rect x="1.6" y="1.6" width="20.8" height="13.6" fill="url(#scr)"/>
 </svg>
 <svg class="a" style="left:21px;top:147px" width="22" height="22" viewBox="0 0 22 22"><rect x="15.5" y="2.5" width="2.6" height="6" fill="#f3e3cf" stroke="#b89a7a" stroke-width="0.6"/>
   <path d="M3.6 10.2 L11 3.6 L18.4 10.2 V21.4 H3.6 Z" fill="url(#hbody)" stroke="#9c7a5a" stroke-width="0.8"/>
   <path d="M1.2 11.2 L11 2.4 L20.8 11.2" fill="none" stroke="#621010" stroke-width="2.9" stroke-linejoin="miter"/>
   <path d="M8.6 21.4 V16.6 A2.4 2.4 0 0 1 13.4 16.6 V21.4 Z" fill="url(#hdoor)" stroke="#9a5020" stroke-width="0.6"/></svg>
 <svg class="a" style="left:21px;top:177px" width="22" height="17" viewBox="0 0 22 17">
  <defs><linearGradient id="dsk" x1="0" y1="0" x2="0" y2="1"><stop offset="0" stop-color="#a4e2f8"/><stop offset="1" stop-color="#6cc4ec"/></linearGradient></defs>
  <rect x="0.5" y="0.5" width="21" height="16" rx="1.2" fill="url(#dsk)" stroke="#5a8aa0" stroke-width="0.6"/>
  <rect x="0.5" y="0.5" width="21" height="3.2" fill="#4a4d52"/>
  <path d="M4 16.6 L5.6 12.6 H16.4 L18 16.6 Z" fill="#3c4046"/>
  <rect x="6.4" y="13.6" width="1.8" height="1.8" fill="#8ad4f4"/><rect x="9.3" y="13.6" width="1.8" height="1.8" fill="#8ad4f4"/><rect x="12.2" y="13.6" width="1.8" height="1.8" fill="#8ad4f4"/><rect x="15.1" y="13.6" width="1.1" height="1.8" fill="#8ad4f4"/>
 </svg>
 <svg class="a" style="left:23px;top:199px" width="18" height="22" viewBox="0 0 18 22">
  <defs><linearGradient id="can" x1="0" y1="0" x2="1" y2="0"><stop offset="0" stop-color="#8a8a8a"/><stop offset="0.3" stop-color="#e0e0e0"/><stop offset="0.5" stop-color="#a8a8a8"/><stop offset="0.7" stop-color="#d8d8d8"/><stop offset="1" stop-color="#7a7a7a"/></linearGradient></defs>
  <path d="M1.6 5 L2.6 19.6 Q9 22.4 15.4 19.6 L16.4 5 Z" fill="url(#can)" stroke="#6a6a6a" stroke-width="0.6"/>
  <ellipse cx="9" cy="4.4" rx="8.2" ry="2.6" fill="#d6d6d6" stroke="#7a7a7a" stroke-width="0.6"/>
  <path d="M6.5 3.6 V1.4 H11.5 V3.6" fill="none" stroke="#8a8a8a" stroke-width="1"/>
 </svg>
 <svg class="a" style="left:23px;top:225px" width="18" height="22" viewBox="0 0 18 22">
  <path d="M0.5 0.5 H11.5 L17.5 6.5 V21.5 H0.5 Z" fill="#ececec" stroke="#9a9a9a" stroke-width="0.8"/>
  <path d="M11.5 0.5 V6.5 H17.5" fill="#fafafa" stroke="#b0b0b0" stroke-width="0.6"/>
 </svg>
 <svg class="a" style="left:21px;top:251px" width="19" height="19" viewBox="0 0 19 19">
  <path d="M5.6 15.2 V4.2 L17.6 0.8 V13" fill="none" stroke="#3a9ee0" stroke-width="1.6"/>
  <path d="M5.6 4.2 L17.6 0.8 V3.6 L5.6 7 Z" fill="#3a9ee0"/>
  <ellipse cx="3.4" cy="15.6" rx="3.1" ry="2.5" fill="#3a9ee0"/>
  <ellipse cx="15.2" cy="13.4" rx="3.1" ry="2.5" fill="#3a9ee0"/>
 </svg>
 <svg class="a" style="left:16px;top:274px" width="32" height="28" viewBox="0 0 32 28">
  <defs><linearGradient id="pic" x1="0" y1="0" x2="1" y2="1"><stop offset="0" stop-color="#6e705a"/><stop offset="1" stop-color="#34362c"/></linearGradient></defs>
  <g transform="rotate(-31 14.5 13.5)"><rect x="7" y="6" width="15" height="15" fill="#f6f6f6" stroke="#8a8a8a" stroke-width="0.7"/><rect x="8.6" y="7.6" width="11.8" height="10.4" fill="url(#pic)"/></g>
  <rect x="10.4" y="9.2" width="15.4" height="15.4" fill="#fbfbfb" stroke="#8e9092" stroke-width="0.8"/>
  <rect x="12.2" y="11" width="11.8" height="10" fill="url(#pic)" stroke="#2a2622" stroke-width="0.6"/>
 </svg>
 <svg class="a" style="left:22px;top:303px" width="20" height="22" viewBox="0 0 20 22">
  <defs><linearGradient id="vid" x1="0" y1="0" x2="0" y2="1"><stop offset="0" stop-color="#7cc4f4"/><stop offset="1" stop-color="#3a8ee0"/></linearGradient></defs>
  <rect x="0.4" y="0.4" width="19.2" height="21" fill="#2c2c2c"/>
  <rect x="4" y="1.2" width="12" height="9.4" fill="url(#vid)"/>
  <rect x="4" y="11.6" width="12" height="9.2" fill="url(#vid)"/>
  <g fill="#e8e8e8"><rect x="1.3" y="1.6" width="1.6" height="1.3"/><rect x="1.3" y="4.6" width="1.6" height="1.3"/><rect x="1.3" y="7.6" width="1.6" height="1.3"/><rect x="1.3" y="10.6" width="1.6" height="1.3"/><rect x="1.3" y="13.6" width="1.6" height="1.3"/><rect x="1.3" y="16.6" width="1.6" height="1.3"/><rect x="1.3" y="19.4" width="1.6" height="1.3"/>
  <rect x="17.1" y="1.6" width="1.6" height="1.3"/><rect x="17.1" y="4.6" width="1.6" height="1.3"/><rect x="17.1" y="7.6" width="1.6" height="1.3"/><rect x="17.1" y="10.6" width="1.6" height="1.3"/><rect x="17.1" y="13.6" width="1.6" height="1.3"/><rect x="17.1" y="16.6" width="1.6" height="1.3"/><rect x="17.1" y="19.4" width="1.6" height="1.3"/></g>
 </svg>
 <svg class="a" style="left:21px;top:329px" width="22" height="22" viewBox="0 0 22 22">
  <defs><radialGradient id="grn" cx="0.45" cy="0.3" r="0.75"><stop offset="0" stop-color="#9ada6a"/><stop offset="1" stop-color="#3e9a1e"/></radialGradient></defs>
  <circle cx="11" cy="11" r="10.6" fill="url(#grn)" stroke="#4a9a2a" stroke-width="0.5"/>
  <path d="M9.2 4.8 H12.8 V10.6 H16.4 L11 16.8 L5.6 10.6 H9.2 Z" fill="#fff"/>
 </svg>
 <svg class="a" style="left:20px;top:381px" width="24" height="23" viewBox="0 0 24 23">
  <defs><linearGradient id="hdd" x1="0" y1="0" x2="0" y2="1"><stop offset="0" stop-color="#f2f2f2"/><stop offset="1" stop-color="#c4c4c4"/></linearGradient>
  <linearGradient id="hdf" x1="0" y1="0" x2="1" y2="0"><stop offset="0" stop-color="#111"/><stop offset="0.5" stop-color="#888"/><stop offset="1" stop-color="#444"/></linearGradient></defs>
  <path d="M3.2 0.6 H20.8 L23.4 17 H0.6 Z" fill="url(#hdd)" stroke="#6a6a6a" stroke-width="0.6"/>
  <ellipse cx="12" cy="9.2" rx="7.6" ry="6.4" fill="none" stroke="#b4b4b4" stroke-width="0.7"/>
  <ellipse cx="12" cy="10" rx="2.4" ry="1.6" fill="none" stroke="#b4b4b4" stroke-width="0.7"/>
  <rect x="0.6" y="17" width="22.8" height="5.4" rx="0.8" fill="#505050" stroke="#3a3a3a" stroke-width="0.6"/>
  <rect x="2.6" y="18.4" width="14" height="2.6" fill="url(#hdf)"/>
 </svg>
 <svg class="a" style="left:20px;top:436px" width="24" height="20" viewBox="0 0 24 20">
  <defs><linearGradient id="cld" x1="0" y1="0" x2="0" y2="1"><stop offset="0" stop-color="#fafafa"/><stop offset="1" stop-color="#dcdcdc"/></linearGradient></defs>
  <path d="M5 19.4 C2.2 19.4 0.6 17.4 0.6 15 C0.6 12.4 2.6 10.6 5.2 10.8 C5.8 6 9 2.6 13.4 2.6 C17.6 2.6 20.6 6 20.6 10.2 C22.4 11 23.4 12.8 23.4 15 C23.4 17.6 21.6 19.4 19 19.4 Z" fill="url(#cld)" stroke="#8a8a8a" stroke-width="0.7"/><path d="M5.2 10.8 C7 11 8.4 12 9 13.4" fill="none" stroke="#b0b0b0" stroke-width="0.6"/>
 </svg>
 <svg class="a" style="left:664px;top:10px" width="12" height="9" viewBox="0 0 12 9"><path d="M1.6 7 L5.5 3 L9.4 7" fill="none" stroke="#333" stroke-width="2.6"/></svg>
 <div class="a" style="left:688px;top:17px;width:9px;height:2.5px;background:#333"></div>
 <div class="a" style="left:711px;top:10px;width:9px;height:9px;border:2px solid #333"></div>
 <svg class="a" style="left:733px;top:10px" width="10" height="10" viewBox="0 0 10 10"><path d="M1 1 L9 9 M9 1 L1 9" stroke="#333" stroke-width="2.2"/></svg>
</div>
<!-- DOCK -->
<div class="a" style="left:487px;top:752px;width:306px;height:49px;background:#1d3a45;border:1px solid #152329;border-bottom:none"></div>
<svg class="a" style="left:491px;top:764px" width="42" height="33" viewBox="0 0 42 33">
 <defs><linearGradient id="dkb" x1="0" y1="0" x2="0" y2="1"><stop offset="0" stop-color="#a0e0f6"/><stop offset="1" stop-color="#70c4ea"/></linearGradient></defs>
 <rect x="1.5" y="1.6" width="39" height="30.4" rx="1.6" fill="url(#dkb)" stroke="#3a4a52" stroke-width="0.6"/>
 <path d="M1.4 3.2 Q1.4 1.6 3 1.6 H39 Q40.6 1.6 40.6 3.2 V6.8 H1.4 Z" fill="#4c4e54"/>
 <path d="M1.6 2 H40.4" stroke="#8a8a8a" stroke-width="0.8"/>
 <path d="M6 32 L9 25.2 H33 L36 32 Z" fill="#44484e"/>
 <g fill="#8ad4f4"><rect x="11" y="27" width="3.4" height="3.4"/><rect x="16.3" y="27" width="3.4" height="3.4"/><rect x="21.8" y="27" width="3.4" height="3.4"/><rect x="27.2" y="27" width="3.4" height="3.4"/></g>
</svg>
<div class="a" style="left:539px;top:760px;width:2px;height:35px;background:#98a2a6"></div>
<div class="a" style="left:551px;top:760px;width:35px;height:35px;border:1.6px solid #767878;border-radius:2px;background:linear-gradient(180deg,#2a2c2d,#1a1c1d)"></div>
<div class="a" style="left:554px;top:765px;font-family:'Liberation Sans',sans-serif;font-weight:bold;font-size:15px;line-height:15px;color:#f2f2f2;will-change:transform;-webkit-text-stroke:0.3px #f2f2f2">$</div>
<div class="a" style="left:564px;top:778px;width:8px;height:2.2px;background:#f0f0f0"></div>
<svg class="a" style="left:594px;top:762px" width="44" height="36" viewBox="0 0 44 36">
 <defs><linearGradient id="gf" x1="0" y1="0" x2="0" y2="1"><stop offset="0" stop-color="#ececec"/><stop offset="1" stop-color="#c6c6c6"/></linearGradient></defs>
 <path d="M3 8 V4 H4.8 V1 H19.2 V4 H41.4 V8 Z" fill="#f8f8f8"/>
 <path d="M1.8 7.4 H42.4 L41.6 33.8 H2.6 Z" fill="url(#gf)" stroke="#b0b0b0" stroke-width="0.5"/>
 <path d="M22.2 15 L14.8 21.6 H17.4 V28.4 H20.8 V24 H23.6 V28.4 H27 V21.6 H29.6 Z" fill="#a2a2a2"/>
 <rect x="25.4" y="15.6" width="1.4" height="3" fill="#a2a2a2"/>
</svg>
<svg class="a" style="left:644px;top:756px" width="40" height="40" viewBox="0 0 40 40">
 <defs><radialGradient id="glb" cx="0.5" cy="0.12" r="0.95"><stop offset="0" stop-color="#56d0f0"/><stop offset="0.45" stop-color="#2a86cc"/><stop offset="1" stop-color="#1c3e90"/></radialGradient></defs>
 <circle cx="20" cy="20" r="19" fill="url(#glb)" stroke="#4a88b8" stroke-width="0.8"/>
 <g fill="#174a7e" opacity="0.85">
  <path d="M3.6 16 C4.6 11 8 7.4 12.6 5.6 L17 6.4 L18.6 9.4 L15.6 13.6 L12.6 16.6 L8.6 18.6 L5 18.2 Z"/>
  <path d="M9.2 21.6 L15.4 23.4 L15 28.6 L12.6 33 L11 36.4 L9.6 31 L8.4 25.6 Z"/>
  <path d="M21 7.6 L26.6 5.2 L32.4 8.6 L33 12.6 L28 13.4 L23.6 13 Z"/>
  <path d="M22.6 15.4 L31.6 15.2 L35.6 18.6 L35 24 L31 29.6 L27.6 32.4 L25.6 26 L22.2 21 Z"/>
  <path d="M13 3.2 L18.4 2.4 L17.8 4.6 L14 5 Z"/>
 </g>
</svg>
<svg class="a" style="left:668px;top:773px" width="20" height="27" viewBox="0 0 20 27">
 <path d="M2 2 L2 23.5 L6.2 19 L10.4 26 L14 24 L10 17.2 L17.6 17 Z" fill="#f4f4f4" stroke="#777" stroke-width="0.8" stroke-linejoin="round"/>
</svg>
<svg class="a" style="left:692px;top:756px" width="44" height="42" viewBox="0 0 44 42">
 <defs><linearGradient id="lens" x1="0.2" y1="0" x2="0.7" y2="1"><stop offset="0" stop-color="#f4f4f4"/><stop offset="0.48" stop-color="#c4c8c8"/><stop offset="0.52" stop-color="#7e8a8c"/><stop offset="1" stop-color="#3e4a4c"/></linearGradient>
 <filter id="msh"><feGaussianBlur stdDeviation="2"/></filter></defs>
 <ellipse cx="22" cy="35" rx="14" ry="3" fill="#4a6268" opacity="0.45" filter="url(#msh)"/>
 <path d="M25.6 25 L39.4 38.4" stroke="#3a3a3a" stroke-width="3.6" stroke-linecap="round"/>
 <circle cx="15.2" cy="15" r="11.6" fill="url(#lens)" stroke="#383634" stroke-width="2.4"/>
</svg>
<div class="a" style="left:739px;top:760px;width:2px;height:35px;background:#98a2a6"></div>
<svg class="a" style="left:745px;top:762px" width="46" height="36" viewBox="0 0 46 36">
 <path d="M3.6 9 V4.2 H5.6 V1 H20.2 V4.2 H42.4 V9 Z" fill="#f6f6f6"/>
 <path d="M2.2 7 H44 L43 34 H3.2 Z" fill="url(#ffront)" stroke="#c8a870" stroke-width="0.6"/>
</svg>
<!-- FRAME -->
<div class="a" style="left:1280px;top:0;width:2px;height:804px;background:#f0f0f0"></div>
<div class="a" style="left:1280px;top:0;width:1px;height:802px;background:#fbf8f6"></div>
<div class="a" style="left:0;top:801px;width:1282px;height:3px;background:#f0f0f0"></div>
<div class="a" style="left:0;top:801px;width:1281px;height:1px;background:#faf6f4"></div>
</body></html>
